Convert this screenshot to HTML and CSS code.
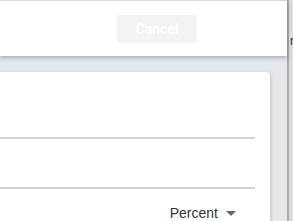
FILE: index.html
```html
<!DOCTYPE html>
<html>
<head>
<meta charset="utf-8">
<link rel="stylesheet" href="styles.css">
</head>
<body>
<div class="frame">
  <div class="main">
    <div class="header">
      <button class="btn-cancel">Cancel</button>
    </div>
    <div class="content">
      <div class="card">
        <div class="field"></div>
        <div class="field"></div>
        <div class="unit-row">
          <span class="unit">Percent</span>
          <span class="caret"></span>
        </div>
      </div>
    </div>
  </div>
  <div class="side">
    <div class="side-line"></div>
    <div class="side-body"><span class="side-text">r</span></div>
  </div>
</div>
</body>
</html>
```
FILE: styles.css
```css
html, body {
  margin: 0;
  padding: 0;
  width: 293px;
  height: 221px;
  overflow: hidden;
  background: #e5e8eb;
  font-family: Roboto, "Liberation Sans", Arial, sans-serif;
}
.frame {
  display: flex;
  width: 293px;
  height: 221px;
}
.main {
  width: 287px;
  display: flex;
  flex-direction: column;
  background: #e5e8eb;
}
.header {
  height: 56px;
  background: #fff;
  border-top: 1px solid #d6d6d6;
  display: flex;
  align-items: flex-start;
  padding-left: 117px;
  box-sizing: content-box;
  box-shadow: 0 2px 4px rgba(0,0,0,0.25);
  position: relative;
  z-index: 1;
}
.btn-cancel {
  margin-top: 14px;
  width: 80px;
  height: 28px;
  border: none;
  border-radius: 2px;
  background: #f3f3f3;
  color: #fff;
  font-family: Roboto, "Liberation Sans", Arial, sans-serif;
  font-weight: 700;
  font-size: 14px;
  padding: 0;
}
.content {
  flex: 1;
  padding-top: 16px;
  padding-right: 17px;
  display: flex;
}
.card {
  flex: 1;
  background: #fff;
  border-top-right-radius: 4px;
  box-shadow: 1px 1px 3px rgba(0,0,0,0.18);
  padding-right: 15px;
  display: flex;
  flex-direction: column;
}
.field {
  height: 48px;
  border-bottom: 2px solid #d2d2d2;
}
.field:first-child {
  height: 65px;
}
.unit-row {
  display: flex;
  justify-content: flex-end;
  align-items: center;
  padding-top: 16px;
  padding-right: 19px;
}
.unit {
  font-family: "Liberation Sans", Arial, sans-serif;
  font-size: 14px;
  color: #333;
}
.caret {
  margin-left: 8px;
  width: 0;
  height: 0;
  border-left: 5px solid transparent;
  border-right: 5px solid transparent;
  border-top: 5px solid #666;
}
.side {
  width: 6px;
  display: flex;
}
.side-line {
  width: 2px;
  background: #a9a9a9;
}
.side-body {
  flex: 1;
  background: #dcdcdc;
  overflow: hidden;
  padding-top: 34px;
  font-size: 12px;
  color: #333;
}
.side-text {
  display: block;
  margin-left: 1px;
}
```
